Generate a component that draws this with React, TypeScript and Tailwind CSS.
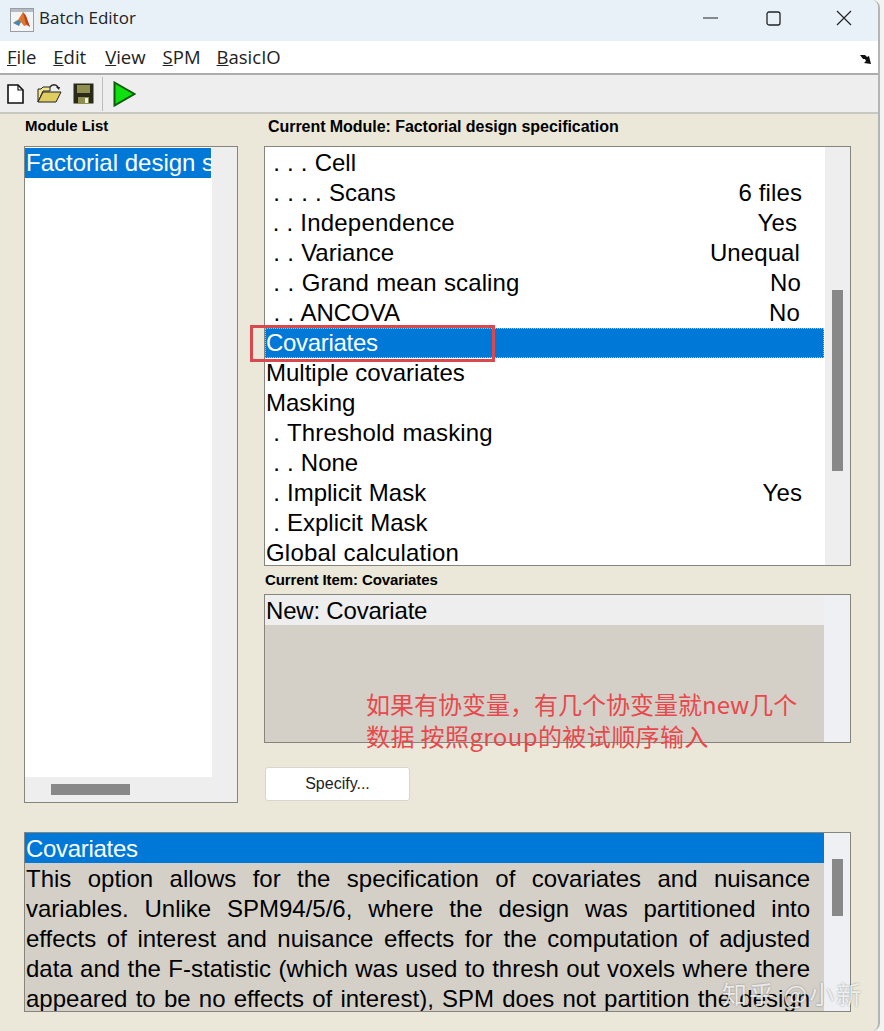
import React from "react";

const sans = "font-['Liberation_Sans',Arial,sans-serif]";

type Row = { t: string; v?: string; pr?: string; sel?: boolean; tr?: string };
const rows: Row[] = [
  { t: " . . . Cell", tr: "[word-spacing:0.5px]" },
  { t: " . . . . Scans", v: "6 files", pr: "pr-[22px]", tr: "[word-spacing:0.6px]" },
  { t: " . . Independence", v: "Yes", pr: "pr-[27px]", tr: "tracking-[0.2px]" },
  { t: " . . Variance", v: "Unequal", pr: "pr-[24px]", tr: "[word-spacing:0.6px]" },
  { t: " . . Grand mean scaling", v: "No", pr: "pr-[23px]", tr: "[word-spacing:0.6px] tracking-[0.1px]" },
  { t: " . . ANCOVA", v: "No", pr: "pr-[24px]", tr: "[word-spacing:0.8px]" },
  { t: "Covariates", sel: true, tr: "tracking-[-0.3px]" },
  { t: "Multiple covariates" },
  { t: "Masking" },
  { t: " . Threshold masking", tr: "[word-spacing:0.5px] tracking-[0.15px]" },
  { t: " . . None", tr: "[word-spacing:0.5px]" },
  { t: " . Implicit Mask", v: "Yes", pr: "pr-[22px]", tr: "[word-spacing:0.5px]" },
  { t: " . Explicit Mask", tr: "[word-spacing:0.5px]" },
  { t: "Global calculation", tr: "tracking-[0.2px]" },
];

const helpLines = [
  "This option allows for the specification of covariates and nuisance",
  "variables. Unlike SPM94/5/6, where the design was partitioned into",
  "effects of interest and nuisance effects for the computation of adjusted",
  "data and the F-statistic (which was used to thresh out voxels where there",
  "appeared to be no effects of interest), SPM does not partition the design",
];

function Logo() {
  return (
    <svg width="24" height="24" viewBox="0 0 24 24">
      <rect x="0.5" y="0.5" width="23" height="23" fill="#f2f4f6" stroke="#9a9ea4" />
      <rect x="1" y="1" width="22" height="3" fill="#b4bbc3" />
      <path d="M3 15l5-3 5-8 3 4 4 11-3-2-3 1-3-4z" fill="#e0752f" />
      <path d="M3 15l5-3 3 2-2 4z" fill="#4a87a8" />
      <path d="M13 4l3 4 4 11-4-3z" fill="#b5431e" />
    </svg>
  );
}

function Tools() {
  return (
    <div className="flex items-center h-[39px] bg-[#eeeeee] border-b-2 border-[#c8c8c2] shrink-0">
      <svg className="ml-[7px]" width="17" height="20" viewBox="0 0 17 20">
        <path d="M1 1h10l5 5v13H1z" fill="#fff" stroke="#111" strokeWidth="1.6" />
        <path d="M11 1v5h5" fill="none" stroke="#111" strokeWidth="1.2" />
      </svg>
      <svg className="ml-[13px]" width="25" height="21" viewBox="0 0 25 21">
        <path d="M1 6h3l2-2h7v4H6L1 19z" fill="#f3e78c" stroke="#222" />
        <path d="M1 19l5-10h18l-5 10z" fill="#e0cd62" stroke="#222" />
        <path d="M13 4c2-3 6-3 8 0" fill="none" stroke="#222" strokeWidth="1.4" />
        <path d="M19 4h4l-1 3z" fill="#222" />
      </svg>
      <svg className="ml-[11px]" width="21" height="21" viewBox="0 0 21 21">
        <rect x="0.5" y="0.5" width="20" height="20" fill="#2a2a1a" />
        <rect x="4" y="2" width="13" height="8" fill="#8f8f52" />
        <rect x="5" y="14" width="11" height="7" fill="#8f8f52" />
        <rect x="12" y="15" width="3" height="5" fill="#f0f0e8" />
      </svg>
      <div className="ml-[8px] w-px h-[34px] bg-[#bdbdbd]" />
      <svg className="ml-[10px]" width="23" height="26" viewBox="0 0 23 26">
        <path d="M1.5 1.5L21.5 13L1.5 24.5z" fill="#10e010" stroke="#0a5c0a" strokeWidth="2" />
      </svg>
    </div>
  );
}

export default function App() {
  return (
    <div className="w-[884px] h-[1031px] overflow-hidden relative bg-[#f3f3f3]">
      <div className="w-[880px] h-[1031px] flex flex-col bg-[#ebe8d9] border-r-2 border-[#b4b4b4] rounded-tr-[8px] rounded-br-[8px] overflow-hidden">
        <div className="h-[41px] flex items-center pb-[5px] bg-[#e9f1f8] shrink-0">
          <div className="ml-[10px] mt-[3px]"><Logo /></div>
          <div className="ml-[5px] text-[17px] text-[#222] font-['Open_Sans',sans-serif]">Batch Editor</div>
          <div className="ml-auto flex items-center">
            <svg width="16" height="16" viewBox="0 0 16 16"><path d="M0 8h15" stroke="#222" strokeWidth="1" /></svg>
            <svg className="ml-[47px]" width="15" height="15" viewBox="0 0 15 15"><rect x="1" y="1" width="13" height="13" rx="2" fill="none" stroke="#222" strokeWidth="1.3" /></svg>
            <svg className="ml-[55px] mr-[26px]" width="16" height="16" viewBox="0 0 16 16"><path d="M1 1l14 14M15 1L1 15" stroke="#222" strokeWidth="1.2" /></svg>
          </div>
        </div>
        <div className="h-[34px] flex items-center bg-white border-b-2 border-[#acacac] shrink-0 relative text-[18.5px] text-[#222] font-['Open_Sans',sans-serif]">
          <span className="ml-[7px]"><u>F</u>ile</span>
          <span className="ml-[17px]"><u>E</u>dit</span>
          <span className="ml-[19px]"><u>V</u>iew</span>
          <span className="ml-[17px]"><u>S</u>PM</span>
          <span className="ml-[16px]"><u>B</u>asicIO</span>
          <svg className="ml-auto mr-[6px] mt-[6px]" width="12" height="10" viewBox="0 0 12 10">
            <path d="M0 0h5l2 2 2-1 2 8-7-1 2-2-1-2-2 0z" fill="#111" />
          </svg>
        </div>
        <Tools />
        <div className={`flex-1 flex flex-col pl-[24px] ${sans}`}>
          <div className="flex">
            <div className="w-[214px] mr-[26px] flex flex-col">
              <div className="h-[32px] pt-[2px] pl-px text-[15px] font-bold text-black leading-[20px]">Module List</div>
              <div className="w-[214px] h-[657px] border border-[#85857d] bg-[#eeeeee] flex flex-col">
                <div className="w-[187px] h-[630px] bg-white pt-px">
                  <div className="w-[186px] h-[30px] pl-px text-[24px] leading-[30px] bg-[#0078d7] text-white overflow-hidden whitespace-nowrap">Factorial design specification</div>
                </div>
                <div className="h-[11px] w-[79px] mt-[7px] ml-[26px] bg-[#888888]" />
              </div>
            </div>
            <div className="w-[587px] flex flex-col">
              <div className="h-[32px] pt-[3px] pl-[4px] text-[16px] font-bold text-black leading-[20px] whitespace-nowrap tracking-[-0.05px]">Current Module: Factorial design specification</div>
              <div className="w-[587px] h-[420px] border border-[#85857d] bg-[#eeeeee] flex overflow-hidden">
                <div className="w-[560px] h-[418px] bg-white pt-px overflow-hidden shrink-0">
                  {rows.map((r) => (
                    <div
                      key={r.t}
                      className={`w-[559px] h-[30px] flex justify-between pl-px text-[24px] leading-[30px] whitespace-pre ${r.sel ? "bg-[#0078d7] text-white outline-1 outline-dotted -outline-offset-1 outline-[#9fc4e4]" : "text-black"} ${r.pr ?? ""}`}
                    >
                      <span className={r.tr ?? ""}>{r.t}</span>
                      {r.v ? <span className="tracking-[0.1px]">{r.v}</span> : null}
                    </div>
                  ))}
                </div>
                <div className="w-[11px] h-[181px] ml-[7px] mt-[143px] bg-[#888888]" />
              </div>
              <div className="h-[28px] pt-[4px] pl-px text-[15px] font-bold text-black leading-[20px] tracking-[-0.1px]">Current Item: Covariates</div>
              <div className="w-[587px] h-[149px] border border-[#85857d] bg-[#eef0f3] flex">
                <div className="w-[559px] h-[147px] bg-[#d4d0c8]">
                  <div className="h-[30px] pl-px pt-px bg-[#eeeeee] text-[24px] leading-[30px] text-black tracking-[-0.2px]">New: Covariate</div>
                </div>
              </div>
              <button className="mt-[24px] ml-px w-[145px] h-[34px] bg-white border border-[#d6d6ce] rounded-[3px] text-[16px] text-[#222]">Specify...</button>
            </div>
          </div>
          <div className="mt-[29px] w-[827px] h-[180px] border border-[#85857d] bg-[#eef0f3] flex overflow-hidden">
            <div className="w-[799px] h-[178px] bg-[#d4d0c8] overflow-hidden shrink-0">
              <div className="h-[30px] pl-px bg-[#0078d7] text-white text-[24px] leading-[32px] tracking-[-0.3px]">Covariates</div>
              {helpLines.map((l) => (
                <div key={l} className="h-[30px] pl-px pr-[14px] text-[24px] leading-[32px] text-black text-justify [text-align-last:justify] whitespace-normal">{l}</div>
              ))}
            </div>
            <div className="w-[11px] h-[57px] ml-[8px] mt-[26px] bg-[#888888]" />
          </div>
        </div>
      </div>

      <div className="absolute left-[250px] top-[325px] w-[245px] h-[37px] border-[3px] border-[#d9484c]" />
      <div className="absolute left-[366px] top-[688px] text-[24px] leading-[32px] text-[#e8484c] whitespace-pre font-['Noto_Sans_CJK_SC',sans-serif]">
        <div>如果有协变量，有几个协变量就new几个</div>
        <div className="tracking-[0.4px]">数据 按照group的被试顺序输入</div>
      </div>
      <div className="absolute left-[722px] top-[977px] text-[25px] leading-[32px] tracking-[2px] text-white/80 font-['Noto_Sans_CJK_SC',sans-serif] [text-shadow:0_0_2px_rgba(0,0,0,0.4)]">知乎 @小新</div>
    </div>
  );
}
